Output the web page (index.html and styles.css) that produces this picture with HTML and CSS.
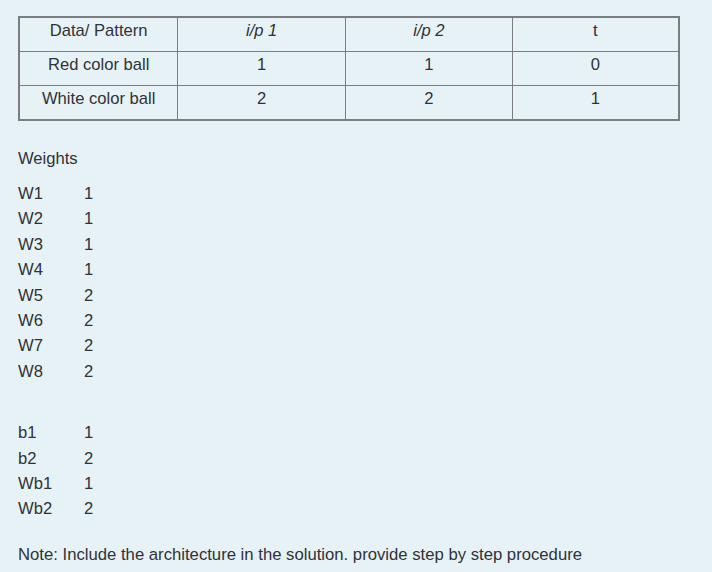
FILE: index.html
```html
<!DOCTYPE html>
<html>
<head>
<meta charset="utf-8">
<link rel="stylesheet" href="styles.css">
</head>
<body>
<div class="page">
  <table class="data">
    <colgroup>
      <col class="c1"><col class="c2"><col class="c3"><col class="c4">
    </colgroup>
    <tr><td>Data/ Pattern</td><td class="it">i/p 1</td><td class="it">i/p 2</td><td>t</td></tr>
    <tr><td>Red color ball</td><td>1</td><td>1</td><td>0</td></tr>
    <tr><td>White color ball</td><td>2</td><td>2</td><td>1</td></tr>
  </table>

  <div class="heading">Weights</div>
  <div class="kv">
    <span>W1</span><span>1</span>
    <span>W2</span><span>1</span>
    <span>W3</span><span>1</span>
    <span>W4</span><span>1</span>
    <span>W5</span><span>2</span>
    <span>W6</span><span>2</span>
    <span>W7</span><span>2</span>
    <span>W8</span><span>2</span>
  </div>
  <div class="kv bias">
    <span>b1</span><span>1</span>
    <span>b2</span><span>2</span>
    <span>Wb1</span><span>1</span>
    <span>Wb2</span><span>2</span>
  </div>
  <p class="note">Note: Include the architecture in the solution. provide step by step procedure</p>
</div>
</body>
</html>
```
FILE: styles.css
```css
html, body {
  margin: 0;
  padding: 0;
  background: #e7f2f6;
}
body {
  font-family: "Liberation Sans", Arial, sans-serif;
  color: #2f3336;
}
.page {
  padding: 16px 0 0 18px;
}
.data {
  border-collapse: collapse;
  width: 662px;
  font-size: 16.6px;
  border: 2px solid #7a7e80;
}
.c1 { width: 159px; }
.c2 { width: 168px; }
.c3 { width: 167px; }
.c4 { width: 167px; }
.data td {
  border: 1px solid #7a7e80;
  text-align: center;
  vertical-align: top;
  height: 30px;
  padding: 3px 0 0;
  line-height: 20px;
}
.data .it { font-style: italic; }
.heading {
  font-size: 16.6px;
  margin-top: 28px;
  line-height: 20px;
}
.kv {
  display: grid;
  grid-template-columns: 66px auto;
  justify-content: start;
  font-size: 16.6px;
  line-height: 25.4px;
  margin-top: 12px;
}
.kv.bias {
  margin-top: 36px;
}
.note {
  font-size: 16.7px;
  margin: 23px 0 0;
  line-height: 20px;
}
```
